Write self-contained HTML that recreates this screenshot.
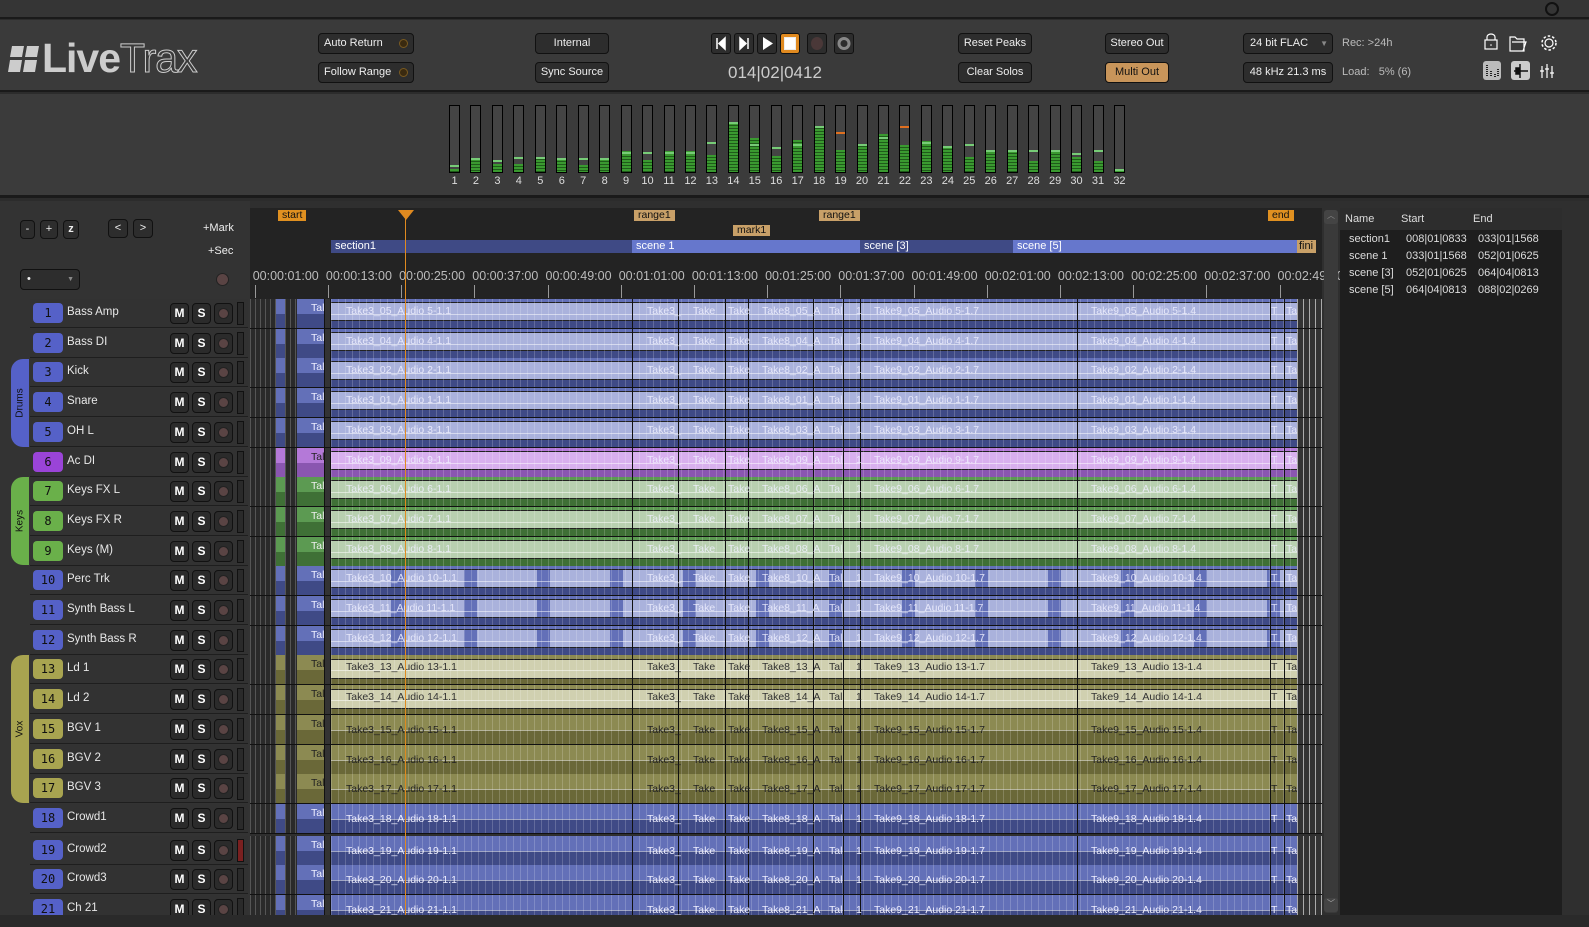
<!DOCTYPE html>
<html><head><meta charset="utf-8">
<style>
*{box-sizing:border-box;margin:0;padding:0}
body{width:1589px;height:927px;background:#2c2c2c;font-family:"Liberation Sans",sans-serif;color:#ddd;position:relative;overflow:hidden;font-size:11px}
.a{position:absolute}
.btn{position:absolute;border:1px solid #111;border-radius:4px;background:#2d2d2d;color:#eee;font-size:11px;text-align:center;line-height:19px;height:21px}
.led{position:absolute;right:5px;top:5px;width:9px;height:9px;border-radius:50%;background:#3a2a10;border:1px solid #7a5a20}
.tb{position:absolute;top:33px;width:20px;height:21px;border:1px solid #111;border-radius:3px;background:#2d2d2d}
.mt{position:absolute;top:105px;width:11px;height:68px;border:1px solid #000;background:#444}
.ml{position:absolute;top:175px;width:22px;text-align:center;font-size:11px;color:#ddd}
.row{position:absolute;left:30px;width:218px;height:29px;border-bottom:1px solid #1e1e1e;background:#323232}
.num{position:absolute;left:3px;top:4px;width:30px;height:20px;border-radius:4px;text-align:center;line-height:20px;font-size:12px;color:#111;font-family:"DejaVu Sans Mono",monospace}
.nm{position:absolute;left:37px;top:7px;font-size:11.5px;color:#e8e8e8}
.ms{position:absolute;top:4px;width:19px;height:21px;border:1px solid #111;border-radius:4px;background:#2b2b2b;color:#fff;font-weight:bold;font-size:12px;text-align:center;line-height:19px}
.rc{position:absolute;left:184px;top:4px;width:19px;height:21px;border:1px solid #111;border-radius:4px;background:#2b2b2b}
.rc i{position:absolute;left:3px;top:4px;width:11px;height:11px;border-radius:50%;background:#5a4444;border:1px solid #222}
.sl{position:absolute;left:207px;top:3px;width:7px;height:23px;border:1px solid #111;background:#2a2a2a}
.tr{position:absolute;left:250px;width:1072px;height:30px;border-bottom:1px solid #111;overflow:hidden}
.tk{position:absolute;top:3px;font-size:10.5px;white-space:nowrap}
.grp{position:absolute;left:11px;width:18px;border-radius:12px 0 0 12px;color:#111;font-size:10px}
.grp span{position:absolute;top:50%;transform:translate(-50%,-50%) rotate(-90deg);left:9px;white-space:nowrap}
.tm{position:absolute;top:269px;font-size:12.5px;color:#bbb}
.tick{position:absolute;top:285px;width:1px;height:13px;background:#999}
.sec{position:absolute;top:240px;height:13px;color:#fff;font-size:11px;line-height:13px;padding-left:4px}
.flag{position:absolute;height:11px;background:#c8a068;color:#111;font-size:10.5px;line-height:11px;padding:0 4px}
.flag.o{background:#e09020}
</style></head><body>
<div class="a" style="left:0;top:0;width:1589px;height:19px;background:#353535;border-bottom:2px solid #1a1a1a"></div>
<div class="a" style="left:1545px;top:2px;width:14px;height:14px;border-radius:50%;border:2px solid #111"></div>
<div class="a" style="left:0;top:20px;width:1589px;height:72px;background:#3a3a3a;border-bottom:2px solid #1a1a1a"></div>
<div class="a" style="left:8px;top:37px;font-size:41px;font-weight:bold;color:#ccc;letter-spacing:-1px;line-height:42px;white-space:nowrap">
<span style="display:inline-block;width:34px;height:30px;position:relative;top:2px"><svg width="34" height="30"><path d="M4 2h12l-2 11h-12zM19 2h12l-2 11h-12zM2 16h12l-2 12h-12zM17 16h12l-2 12h-12z" fill="#ccc"/></svg></span>Live<span style="font-weight:normal;color:transparent;-webkit-text-stroke:1px #ccc">Trax</span></div>
<div class="btn" style="left:318px;top:33px;width:96px;text-align:left;padding-left:5px">Auto Return<div class="led"></div></div>
<div class="btn" style="left:318px;top:62px;width:96px;text-align:left;padding-left:5px">Follow Range<div class="led"></div></div>
<div class="btn" style="left:535px;top:33px;width:74px">Internal</div>
<div class="btn" style="left:535px;top:62px;width:74px">Sync Source</div>
<div class="tb" style="left:711px"><svg width="18" height="19"><path d="M5 4v11M13 4l-6 5.5 6 5.5z" stroke="#fff" fill="#fff" stroke-width="1.5"/></svg></div>
<div class="tb" style="left:734px"><svg width="18" height="19"><path d="M13 4v11M5 4l6 5.5-6 5.5z" stroke="#fff" fill="#fff" stroke-width="1.5"/></svg></div>
<div class="tb" style="left:757px"><svg width="18" height="19"><path d="M5 3l10 6.5-10 6.5z" fill="#fff"/></svg></div>
<div class="tb" style="left:780px;background:#e08a20;border-color:#111"><div style="position:absolute;left:3px;top:3px;width:12px;height:13px;background:#fff;border:1px solid #eee"></div></div>
<div class="tb" style="left:807px"><div style="position:absolute;left:3px;top:3px;width:12px;height:13px;border-radius:50%;background:#4a3838"></div></div>
<div class="tb" style="left:834px"><svg width="18" height="19"><circle cx="9" cy="9.5" r="5" stroke="#888" stroke-width="3" fill="none"/></svg></div>
<div class="a" style="left:728px;top:63px;font-size:17px;color:#ccc">014|02|0412</div>
<div class="btn" style="left:958px;top:33px;width:74px">Reset Peaks</div>
<div class="btn" style="left:958px;top:62px;width:74px">Clear Solos</div>
<div class="btn" style="left:1105px;top:33px;width:64px">Stereo Out</div>
<div class="btn" style="left:1105px;top:62px;width:64px;background:#c8955a;color:#111">Multi Out</div>
<div class="btn" style="left:1243px;top:33px;width:90px;text-align:left;padding-left:6px">24 bit FLAC<span style="position:absolute;right:4px;color:#888;font-size:8px">▼</span></div>
<div class="btn" style="left:1243px;top:62px;width:90px">48 kHz 21.3 ms</div>
<div class="a" style="left:1342px;top:37px;color:#bbb">Rec: &gt;24h</div>
<div class="a" style="left:1342px;top:66px;color:#bbb">Load: &nbsp;&nbsp;5% (6)</div>
<svg class="a" style="left:1482px;top:33px" width="80" height="50">
<rect x="3" y="7" width="12" height="9" fill="none" stroke="#fff" stroke-width="1.2"/><path d="M5 7v-3a4 3 0 0 1 8 0v3" fill="none" stroke="#fff" stroke-width="1.2"/><circle cx="9" cy="12" r=".8" fill="#fff"/>
<path d="M28 4h5l2 2h7v12h-14zM30 9h14l-3 9" fill="none" stroke="#fff" stroke-width="1.2"/>
<circle cx="67" cy="10" r="4" fill="none" stroke="#fff" stroke-width="1.2"/><circle cx="67" cy="10" r="7" fill="none" stroke="#fff" stroke-width="1.5" stroke-dasharray="2.5 2"/>
<rect x="1" y="28" width="18" height="19" rx="3" fill="#bbb"/><path d="M5 32v12M9 38v6M13 41v3M16 36v8" stroke="#222" stroke-width="2" stroke-dasharray="1 1"/>
<rect x="29" y="28" width="19" height="19" rx="3" fill="#ccc"/><path d="M32 38h14M38 31v14M34 35h4v6h-4z" stroke="#111" stroke-width="1.5" fill="#111"/>
<path d="M60 33v12M65 31v14M70 33v12M58 38h4M63 36h4M68 40h4" stroke="#fff" stroke-width="1.2"/>
</svg>
<div class="a" style="left:0;top:94px;width:1589px;height:104px;background:#3b3b3b;border-bottom:3px solid #1a1a1a"></div>
<div id="meters"></div>
<div class="a" style="left:0;top:201px;width:1589px;height:726px;background:#2f2f2f"></div>
<div class="a" style="left:0;top:201px;width:250px;height:726px;background:#333"></div>
<div class="a" style="left:250px;top:208px;width:1072px;height:91px;background:#232323"></div>
<div class="btn" style="left:20px;top:220px;width:15px;height:19px;line-height:17px">-</div>
<div class="btn" style="left:40px;top:220px;width:18px;height:19px;line-height:17px">+</div>
<div class="btn" style="left:63px;top:220px;width:16px;height:19px;line-height:17px;font-weight:bold">z</div>
<div class="btn" style="left:108px;top:219px;width:20px;height:19px;line-height:17px">&lt;</div>
<div class="btn" style="left:133px;top:219px;width:20px;height:19px;line-height:17px">&gt;</div>
<div class="a" style="left:203px;top:222px;font-size:11px;color:#eee">+Mark</div>
<div class="a" style="left:208px;top:245px;font-size:11px;color:#eee">+Sec</div>
<div class="btn" style="left:20px;top:269px;width:60px;height:21px;text-align:left;padding-left:6px">•<span style="position:absolute;right:5px;color:#888;font-size:7px">▼</span></div>
<div class="a" style="left:216px;top:273px;width:13px;height:13px;border-radius:50%;background:#5a4444;border:1px solid #222"></div>
<div class="flag o" style="left:278px;top:210px">start</div>
<div class="a" style="left:398px;top:210px;width:0;height:0;border-left:8px solid transparent;border-right:8px solid transparent;border-top:10px solid #e08a20"></div>
<div class="flag" style="left:634px;top:210px">range1</div>
<div class="flag" style="left:819px;top:210px">range1</div>
<div class="flag" style="left:733px;top:225px">mark1</div>
<div class="flag o" style="left:1268px;top:210px">end</div>
<div class="sec" style="left:331px;width:301px;background:#3f4a85">section1</div>
<div class="sec" style="left:632px;width:228px;background:#6677cc">scene 1</div>
<div class="sec" style="left:860px;width:153px;background:#3f4a85">scene [3]</div>
<div class="sec" style="left:1013px;width:284px;background:#6677cc">scene [5]</div>
<div class="sec" style="left:1297px;width:19px;background:#c8a068;color:#111;padding-left:2px">fini</div>
<div id="ruler"></div>
<div id="rows"></div>
<div class="a" style="left:405px;top:218px;width:1px;height:709px;background:#e08a20"></div>
<div class="a" style="left:1324px;top:210px;width:14px;height:703px;background:#3a3a3a;border-radius:3px"></div>
<div class="a" style="left:1324px;top:210px;width:14px;height:14px;background:#444;border-radius:3px;color:#888;font-size:8px;text-align:center">︿</div>
<div class="a" style="left:1324px;top:898px;width:14px;height:14px;background:#444;border-radius:3px;color:#aaa;font-size:8px;text-align:center">﹀</div>
<div class="a" style="left:1340px;top:208px;width:222px;height:716px;background:#1e1e1e"></div>
<div class="a" style="left:1340px;top:208px;width:222px;height:22px;background:#2d2d2d"></div>
<div class="a" style="left:1345px;top:213px;color:#ddd">Name</div>
<div class="a" style="left:1401px;top:213px;color:#ddd">Start</div>
<div class="a" style="left:1473px;top:213px;color:#ddd">End</div>
<div class="a" style="left:1349px;top:231px;line-height:17px;color:#ddd">section1<br>scene 1<br>scene [3]<br>scene [5]</div>
<div class="a" style="left:1406px;top:231px;line-height:17px;color:#ddd">008|01|0833<br>033|01|1568<br>052|01|0625<br>064|04|0813</div>
<div class="a" style="left:1478px;top:231px;line-height:17px;color:#ddd">033|01|1568<br>052|01|0625<br>064|04|0813<br>088|02|0269</div>
<div class="a" style="left:0;top:915px;width:1589px;height:12px;background:#2a2a2a"></div>
<script>
var m='',lv=[8,18,12,20,22,18,18,18,30,30,30,30,42,70,48,40,46,66,56,40,55,68,44,36,38,28,30,28,28,22,28,2];
var pk=[8,18,15,20,20,18,18,18,28,28,28,28,42,72,40,35,40,66,58,40,50,66,42,36,40,30,30,30,30,26,30,2];
for(var i=0;i<32;i++){var x=449+i*21.45;var h=lv[i];
m+='<div class="mt" style="left:'+x+'px"><div style="position:absolute;bottom:0;left:0;right:0;height:'+(i%3==0?h*0.4:h*0.7)+'px;background:repeating-linear-gradient(#3a9a30 0 2px,#1f5a1a 2px 3px)"></div><div style="position:absolute;left:0;right:0;bottom:'+pk[i]+'%;height:2px;background:'+((i==18||i==21)?'#e07020':'#7c7')+'"></div></div><div class="ml" style="left:'+(x-5.5)+'px">'+(i+1)+'</div>';}
document.getElementById('meters').innerHTML=m;
var r='',t=['00:00:01:00','00:00:13:00','00:00:25:00','00:00:37:00','00:00:49:00','00:01:01:00','00:01:13:00','00:01:25:00','00:01:37:00','00:01:49:00','00:02:01:00','00:02:13:00','00:02:25:00','00:02:37:00','00:02:49:00'];
for(var i=0;i<15;i++){var x=254.7+i*73.2;r+='<div class="tm" style="left:'+(x-2)+'px">'+t[i]+'</div><div class="tick" style="left:'+x+'px"></div>';}
document.getElementById('ruler').innerHTML=r;
var names=['Bass Amp','Bass DI','Kick','Snare','OH L','Ac DI','Keys FX L','Keys FX R','Keys (M)','Perc Trk','Synth Bass L','Synth Bass R','Ld 1','Ld 2','BGV 1','BGV 2','BGV 3','Crowd1','Crowd2','Crowd3','Ch 21'];
var an=[5,4,2,1,3,9,6,7,8,10,11,12,13,14,15,16,17,18,19,20,21];
var B={b:'#5561c8',t:'#6370b8',d:'#3f4a86',w:'#aab2dc',tx:'#eef'},P={b:'#9a44d8',t:'#b479d8',d:'#8a56b0',w:'#d8b0ee',tx:'#222'},G={b:'#6ab04a',t:'#5c9a52',d:'#3f7036',w:'#b8d0b0',tx:'#eee'},O={b:'#a8a450',t:'#8c8a52',d:'#6a6838',w:'#d0d0b0',tx:'#222'};
var s='';
for(var i=0;i<21;i++){var n=i+1,c=(n==6)?P:(n>=7&&n<=9)?G:(n>=13&&n<=17)?O:B;
var y=299+i*29.7;if(n>=19)y+=2;
s+='<div class="row" style="top:'+y+'px"><div class="num" style="background:'+c.b+'">'+n+'</div><div class="nm">'+names[i]+'</div><div class="ms" style="left:140px">M</div><div class="ms" style="left:162px">S</div><div class="rc"><i></i></div><div class="sl"'+(n==19?' style="background:#7a2020"':'')+'></div></div>';
var wave=n<=14;var a=an[i];
var bg='linear-gradient('+c.t+' 0 50%,'+c.d+' 50%)';
s+='<div class="tr" style="top:'+y+'px;background:#2a2a2a">';
s+='<div class="a" style="left:0;top:0;width:26px;height:30px;background:repeating-linear-gradient(90deg,#555 0 1px,transparent 1px 5px)"></div>';
s+='<div class="a" style="left:26px;top:0;width:9px;height:30px;background:'+bg+'"></div>';
s+='<div class="a" style="left:35px;top:0;width:12px;height:30px;background:repeating-linear-gradient(90deg,#555 0 1px,transparent 1px 5px)"></div>';
s+='<div class="a" style="left:47px;top:0;width:27px;height:30px;background:'+bg+'"></div><div class="tk" style="left:61px;color:'+c.tx+'">Tal</div>';
s+='<div class="a" style="left:74px;top:0;width:7px;height:30px;background:#333;border-left:1px solid #111;border-right:1px solid #111"></div>';
s+='<div class="a" style="left:81px;top:0;width:966px;height:30px;background:'+bg+'"></div>';
if(wave){s+='<div class="a" style="left:81px;top:'+(n>=13?4:3)+'px;width:966px;height:'+(n>=13?20:19)+'px;background:'+c.w+';border-top:1px solid #222;border-bottom:1px solid #222'+(n>=10&&n<=12?';background:repeating-linear-gradient(90deg,'+c.w+' 0 60px,'+c.t+' 60px 73px)':'')+'"></div>';}
s+='<div class="a" style="left:81px;top:0;width:966px;height:30px;background:repeating-linear-gradient(90deg,rgba(255,255,255,.18) 0 1px,transparent 1px 7px)"></div>';
s+='<div class="a" style="left:81px;top:15px;width:966px;height:1px;background:rgba(255,255,255,.5)"></div>';
[382,428,475,498,563,593,610,827,1020,1034].forEach(function(x){s+='<div class="a" style="left:'+x+'px;top:0;width:1px;height:30px;background:#111"></div>';});
var tc=wave?(n>=13?'#333':'rgba(240,240,255,.85)'):c.tx;var ty=wave?6:9;
s+='<div class="tk" style="top:'+ty+'px;left:96px;color:'+tc+'">Take3_'+String(a).padStart(2,'0')+'_Audio '+a+'-1.1</div>';
[[397,'Take3_'],[443,'Take'],[478,'Take'],[512,'Take8_'+String(a).padStart(2,'0')+'_A'],[579,'Tal'],[606,'1'],[624,'Take9_'+String(a).padStart(2,'0')+'_Audio '+a+'-1.7'],[841,'Take9_'+String(a).padStart(2,'0')+'_Audio '+a+'-1.4'],[1021,'T'],[1036,'Ta']].forEach(function(q){s+='<div class="tk" style="top:'+ty+'px;left:'+q[0]+'px;color:'+tc+'">'+q[1]+'</div>';});
s+='<div class="a" style="left:1047px;top:0;width:25px;height:30px;background:repeating-linear-gradient(90deg,#aaa 0 1px,#333 1px 6px)"></div>';
s+='</div>';}
s+='<div class="grp" style="top:359px;height:88px;background:#5561c8"><span>Drums</span></div>';
s+='<div class="grp" style="top:477px;height:88px;background:#6ab04a"><span>Keys</span></div>';
s+='<div class="grp" style="top:655px;height:148px;background:#a8a450"><span>Vox</span></div>';
document.getElementById('rows').innerHTML=s;
</script>
</body></html>
